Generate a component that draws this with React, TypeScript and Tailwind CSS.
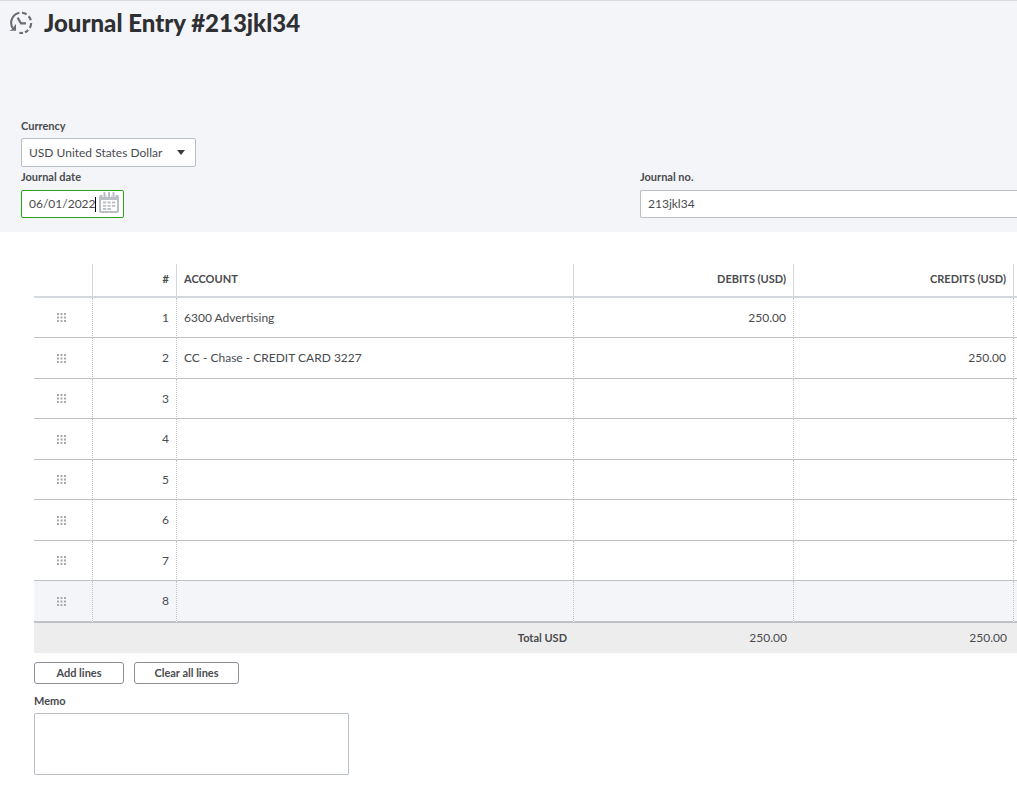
import { useState } from "react";

type Line = { id: number; account?: string; debit?: string; credit?: string };

const lines: Line[] = [
  { id: 1, account: "6300 Advertising", debit: "250.00" },
  { id: 2, account: "CC - Chase - CREDIT CARD 3227", credit: "250.00" },
  { id: 3 },
  { id: 4 },
  { id: 5 },
  { id: 6 },
  { id: 7 },
  { id: 8 },
];

function HistoryIcon() {
  return (
    <svg viewBox="0 0 24 24" className="h-6 w-6" fill="none" stroke="#6b6c72" strokeWidth="2.1" aria-hidden="true">
      <path d="M10.4 1.8A10.2 10.2 0 0 0 4.6 18.4" />
      <path d="M0 19.8H7V12.8L5 15.6L3.4 18.2Z" fill="#6b6c72" stroke="none" />
      <path d="M13 1.8A10.2 10.2 0 0 1 17.6 3.4" />
      <path d="M19.6 5.2A10.2 10.2 0 0 1 21.8 9.2" />
      <path d="M22.2 12A10.2 10.2 0 0 1 20.8 17" />
      <path d="M19.2 19A10.2 10.2 0 0 1 16 21.2" />
      <path d="M14 21.9A10.2 10.2 0 0 1 10.4 21.9" />
      <path d="M8.6 6.6L12 12.4H17" />
    </svg>
  );
}

function CalendarIcon() {
  return (
    <svg viewBox="0 0 20 22" className="h-[22px] w-5" aria-hidden="true">
      <rect x="1" y="4" width="18" height="16" rx="1" fill="#fff" stroke="#babec5" strokeWidth="2" />
      <rect x="1" y="3" width="18" height="5" fill="#babec5" />
      <path d="M5.5 0V5M10 0V5M14.5 0V5" stroke="#fff" strokeWidth="4" />
      <path d="M5.5 0V5M10 0V5M14.5 0V5" stroke="#babec5" strokeWidth="2" />
      <path d="M4 10.5H16.5M4 13.8H16.5M4 17H12" stroke="#babec5" strokeWidth="1.8" strokeDasharray="3.2 1.3" />
    </svg>
  );
}

function DragHandle() {
  return (
    <svg viewBox="0 0 9 9" className="h-[9px] w-[9px]" fill="#a9aaae" aria-hidden="true">
      {[0, 3.5, 7].map((y) =>
        [0, 3.5, 7].map((x) => <rect key={`${x}-${y}`} x={x} y={y} width="2" height="2" />),
      )}
    </svg>
  );
}

const headCell = "h-[34px] border-b-2 border-[#d4d7dc] px-[7px] pb-[2px] text-[11px] font-bold";
const bodyCell = "border-[#c1c2c5] px-[7px] group-last:border-b-2";

export default function App() {
  const [date, setDate] = useState("06/01/2022");
  const [number, setNumber] = useState("213jkl34");

  return (
    <main className="min-h-screen overflow-x-hidden bg-white font-['Lato',sans-serif] text-xs text-[#4a4b4f]">
      <header className="border-t border-[#d9dae0] bg-[#f4f5f9] pb-[14px]">
        <div className="flex h-11 items-center gap-[11px] pl-[9px]">
          <HistoryIcon />
          <h1 className="text-2xl font-black text-[#2f3033]">Journal Entry #213jkl34</h1>
        </div>
        <div className="flex flex-col pl-[21px] pt-[72px]">
          <label htmlFor="currency" className="h-[21px] text-[11px] leading-[18px] font-bold">
            Currency
          </label>
          <div className="relative h-[29px] w-[175px]">
            <select
              id="currency"
              className="h-full w-full appearance-none rounded-xs border border-[#babec5] bg-white pl-[7px] text-xs outline-none"
            >
              <option>USD United States Dollar</option>
            </select>
            <svg
              viewBox="0 0 8 5"
              className="pointer-events-none absolute top-3 right-[11px] h-[5px] w-2"
              fill="#393a3d"
              aria-hidden="true"
            >
              <path d="M0 0H8L4 5Z" />
            </svg>
          </div>
          <div className="flex justify-between">
            <div>
              <label htmlFor="journal-date" className="block h-[23px] text-[11px] leading-5 font-bold">
                Journal date
              </label>
              <div className="flex h-7 w-[103px] items-center rounded-xs border border-[#2ca01c] bg-white pl-[7px]">
                <input
                  id="journal-date"
                  value={date}
                  onChange={(e) => setDate(e.target.value)}
                  className="w-[66px] text-xs outline-none"
                />
                <span className="h-[15px] w-px bg-black" />
                <button type="button" aria-label="Choose date" className="ml-[3px] pb-[2px]">
                  <CalendarIcon />
                </button>
              </div>
            </div>
            <div className="w-[377px]">
              <label htmlFor="journal-no" className="block h-[23px] text-[11px] leading-5 font-bold">
                Journal no.
              </label>
              <input
                id="journal-no"
                value={number}
                onChange={(e) => setNumber(e.target.value)}
                className="h-7 w-full rounded-l-xs border border-r-0 border-[#babec5] bg-white px-[7px] pb-[2px] text-xs outline-none"
              />
            </div>
          </div>
        </div>
      </header>

      <section className="pt-8 pl-[34px]">
        <table className="w-full table-fixed border-separate border-spacing-0">
          <colgroup>
            <col className="w-[59px]" />
            <col className="w-[84px]" />
            <col />
            <col className="w-[220px]" />
            <col className="w-[220px]" />
            <col className="w-[3px]" />
          </colgroup>
          <thead>
            <tr>
              <th className={`${headCell} border-r`} aria-label="Reorder" />
              <th className={`${headCell} border-r text-right`}>#</th>
              <th className={`${headCell} border-r text-left`}>ACCOUNT</th>
              <th className={`${headCell} border-r text-right`}>DEBITS (USD)</th>
              <th className={`${headCell} border-r text-right`}>CREDITS (USD)</th>
              <td className="border-b-2 border-[#d4d7dc] p-0" />
            </tr>
          </thead>
          <tbody>
            {lines.map((line) => (
              <tr key={line.id} className="group h-10 even:h-[41px] last:bg-[#f4f5f9] even:last:h-[42px]">
                <td className={`${bodyCell} border-r border-b pl-[23px] [border-right-style:dotted]`}>
                  <DragHandle />
                </td>
                <td className={`${bodyCell} border-r border-b text-right [border-right-style:dotted]`}>{line.id}</td>
                <td className={`${bodyCell} border-r border-b [border-right-style:dotted]`}>{line.account}</td>
                <td className={`${bodyCell} border-r border-b text-right [border-right-style:dotted]`}>{line.debit}</td>
                <td className={`${bodyCell} border-r border-b text-right [border-right-style:dotted]`}>{line.credit}</td>
                <td className="border-b border-[#c1c2c5] p-0 group-last:border-b-2" />
              </tr>
            ))}
          </tbody>
          <tfoot>
            <tr className="h-[30px] bg-[#ededed]">
              <th colSpan={3} className="px-[7px] text-right text-[11px] font-bold">
                Total USD
              </th>
              <td className="px-[7px] text-right">250.00</td>
              <td className="px-[7px] text-right">250.00</td>
              <td className="p-0" />
            </tr>
          </tfoot>
        </table>

        <div className="mt-[9px] flex gap-[10px]">
          <button type="button" className="h-[22px] w-[90px] rounded-[3px] border border-[#8d9096] text-[11px] font-bold">
            Add lines
          </button>
          <button type="button" className="h-[22px] w-[105px] rounded-[3px] border border-[#8d9096] text-[11px] font-bold">
            Clear all lines
          </button>
        </div>

        <label htmlFor="memo" className="mt-2 block h-[21px] text-[11px] leading-[18px] font-bold">
          Memo
        </label>
        <textarea id="memo" className="block h-[62px] w-[315px] resize-none rounded-xs border border-[#babec5] p-2 outline-none" />
      </section>
    </main>
  );
}
